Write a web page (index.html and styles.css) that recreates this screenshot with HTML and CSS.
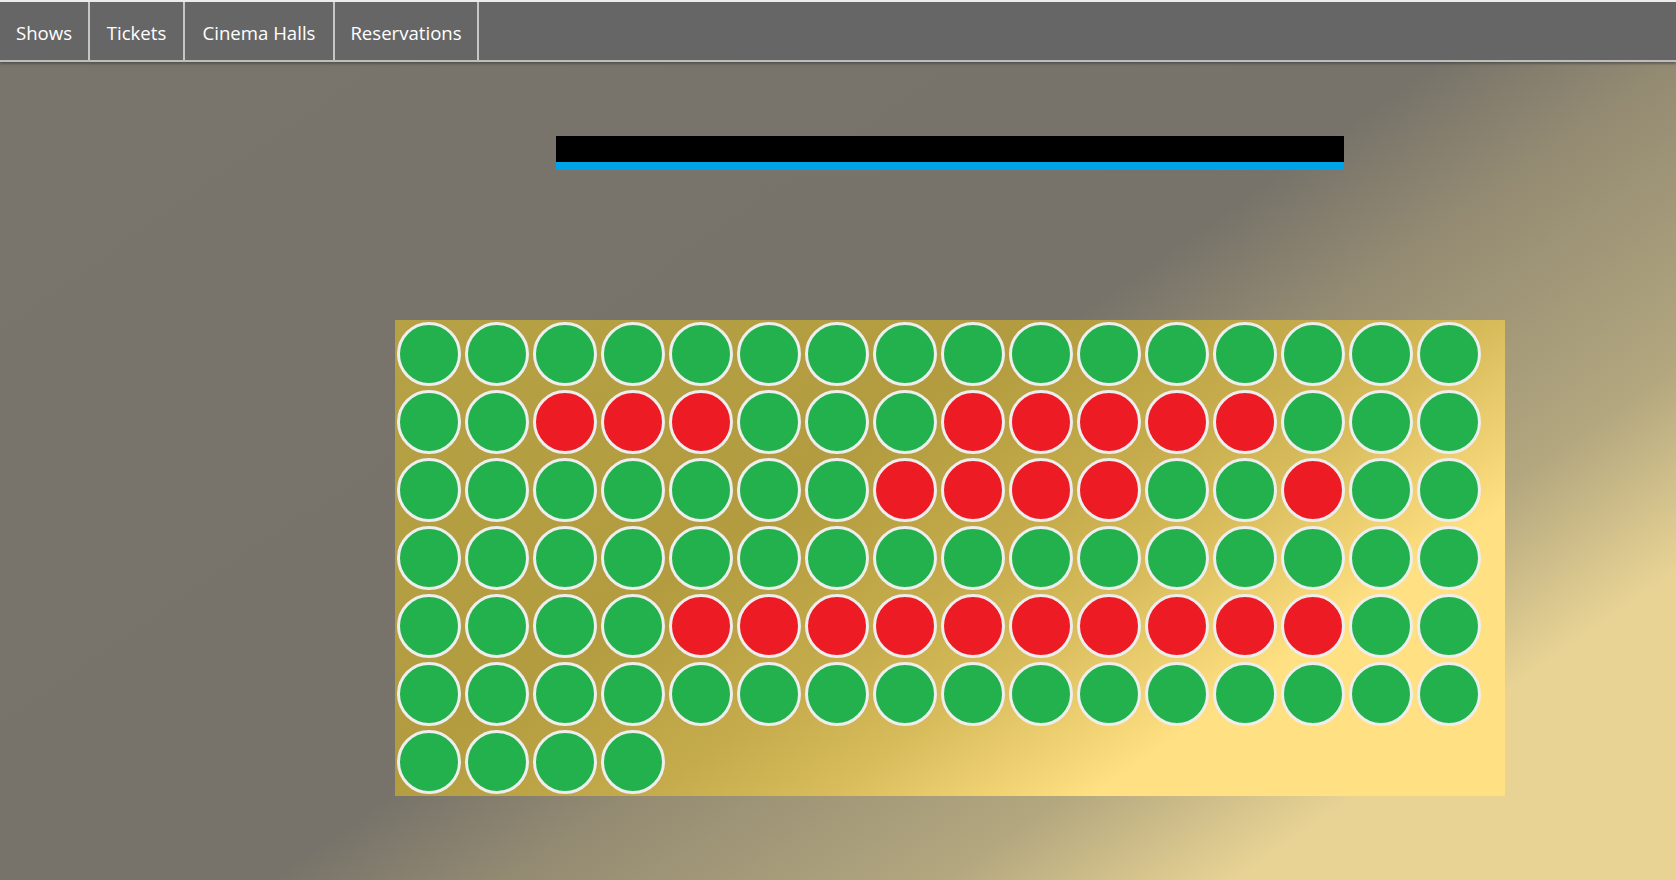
FILE: index.html
```html
<!DOCTYPE html>
<html lang="en">
<head>
<meta charset="utf-8">
<title>Cinema Hall</title>
<link rel="stylesheet" href="styles.css">
</head>
<body>
<nav class="topnav">
  <a class="nav-item nav-shows" href="#">Shows</a>
  <a class="nav-item nav-tickets" href="#">Tickets</a>
  <a class="nav-item nav-halls" href="#">Cinema Halls</a>
  <a class="nav-item nav-reservations" href="#">Reservations</a>
</nav>
<main class="content">
  <div class="screen"></div>
  <div class="seat-map">
    <div class="seat free"></div><div class="seat free"></div><div class="seat free"></div><div class="seat free"></div><div class="seat free"></div><div class="seat free"></div><div class="seat free"></div><div class="seat free"></div><div class="seat free"></div><div class="seat free"></div><div class="seat free"></div><div class="seat free"></div><div class="seat free"></div><div class="seat free"></div><div class="seat free"></div><div class="seat free"></div>
    <div class="seat free"></div><div class="seat free"></div><div class="seat taken"></div><div class="seat taken"></div><div class="seat taken"></div><div class="seat free"></div><div class="seat free"></div><div class="seat free"></div><div class="seat taken"></div><div class="seat taken"></div><div class="seat taken"></div><div class="seat taken"></div><div class="seat taken"></div><div class="seat free"></div><div class="seat free"></div><div class="seat free"></div>
    <div class="seat free"></div><div class="seat free"></div><div class="seat free"></div><div class="seat free"></div><div class="seat free"></div><div class="seat free"></div><div class="seat free"></div><div class="seat taken"></div><div class="seat taken"></div><div class="seat taken"></div><div class="seat taken"></div><div class="seat free"></div><div class="seat free"></div><div class="seat taken"></div><div class="seat free"></div><div class="seat free"></div>
    <div class="seat free"></div><div class="seat free"></div><div class="seat free"></div><div class="seat free"></div><div class="seat free"></div><div class="seat free"></div><div class="seat free"></div><div class="seat free"></div><div class="seat free"></div><div class="seat free"></div><div class="seat free"></div><div class="seat free"></div><div class="seat free"></div><div class="seat free"></div><div class="seat free"></div><div class="seat free"></div>
    <div class="seat free"></div><div class="seat free"></div><div class="seat free"></div><div class="seat free"></div><div class="seat taken"></div><div class="seat taken"></div><div class="seat taken"></div><div class="seat taken"></div><div class="seat taken"></div><div class="seat taken"></div><div class="seat taken"></div><div class="seat taken"></div><div class="seat taken"></div><div class="seat taken"></div><div class="seat free"></div><div class="seat free"></div>
    <div class="seat free"></div><div class="seat free"></div><div class="seat free"></div><div class="seat free"></div><div class="seat free"></div><div class="seat free"></div><div class="seat free"></div><div class="seat free"></div><div class="seat free"></div><div class="seat free"></div><div class="seat free"></div><div class="seat free"></div><div class="seat free"></div><div class="seat free"></div><div class="seat free"></div><div class="seat free"></div>
    <div class="seat free"></div><div class="seat free"></div><div class="seat free"></div><div class="seat free"></div>
  </div>
</main>
</body>
</html>
```

FILE: styles.css
```css
html, body {
  margin: 0;
  padding: 0;
}

body {
  min-height: 100vh;
  font-family: "Open Sans", "Noto Sans", "Liberation Sans", sans-serif;
  background: linear-gradient(145deg,
    #79756c 0%,
    #77736a 52%,
    #938a72 60%,
    #b3a77f 75%,
    #e8d394 85%,
    #e8d394 100%);
}

.topnav {
  display: flex;
  height: 58px;
  background: #666666;
  border-top: 2px solid #ececec;
  border-bottom: 2px solid #bdbdbd;
  box-shadow: 0 2px 2px rgba(60, 60, 60, 0.55);
  position: relative;
}

.nav-item {
  display: flex;
  align-items: center;
  justify-content: center;
  box-sizing: border-box;
  height: 58px;
  padding-top: 2px;
  border-right: 2px solid #c6c6c6;
  color: #ffffff;
  font-size: 18.6px;
  text-decoration: none;
  white-space: nowrap;
}

.nav-shows { width: 90px; }
.nav-tickets { width: 95px; }
.nav-halls { width: 150px; }
.nav-reservations { width: 144px; }

.content {
  width: 1110px;
  margin-left: 395px;
  padding-top: 74px;
}

.screen {
  width: 788px;
  height: 26px;
  margin: 0 auto;
  background: #000000;
  border-bottom: 8px solid #00a2e8;
}

.seat-map {
  margin-top: 150px;
  height: 476px;
  display: flex;
  flex-wrap: wrap;
  align-content: flex-start;
  background: linear-gradient(145deg,
    #b6a145 0%,
    #b29c3f 36%,
    #c5ab4b 52%,
    #d8bc5c 62%,
    #ffe082 77%,
    #ffe082 100%);
}

.seat {
  width: 58px;
  height: 58px;
  margin: 2px;
  border: 3px solid #eeeeee;
  border-radius: 50%;
}

.seat.free { background: #22b14c; }
.seat.taken { background: #ed1c24; }
```
